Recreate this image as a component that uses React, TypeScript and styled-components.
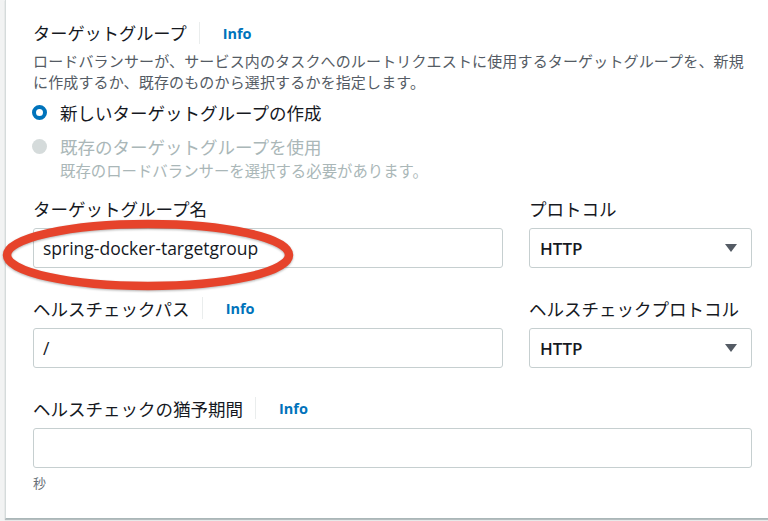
import styled, { createGlobalStyle } from "styled-components";

const GlobalStyle = createGlobalStyle`
  html, body {
    margin: 0;
    padding: 0;
    background: #f2f3f3;
  }
  body {
    font-family: "Noto Sans", "Noto Sans CJK JP", sans-serif;
    color: #16191f;
  }
`;

const Page = styled.div`
  height: 521px;
  overflow: hidden;
  padding-left: 5px;
`;

const Card = styled.section`
  position: relative;
  width: 800px;
  height: 519px;
  box-sizing: border-box;
  background: #ffffff;
  border-left: 1px solid #d5dbdb;
  border-bottom: 1px solid #aab7b8;
  box-shadow: 0 1px 1px 0 rgba(0, 28, 36, 0.25);
  padding: 21px 0 0 27px;
`;

const Content = styled.div`
  width: 719px;
`;

const HeadingRow = styled.div`
  display: flex;
  align-items: center;
  height: 24px;
`;

const Heading = styled.span`
  font-family: "Noto Sans CJK JP", sans-serif;
  font-size: 17.2px;
  line-height: 24px;
  color: #16191f;
`;

const Divider = styled.span`
  width: 1px;
  height: 22px;
  background: #eaeded;
  margin: 0 23px 0 12px;
`;

const InfoLink = styled.a`
  font-family: "Open Sans", "Noto Sans", sans-serif;
  font-weight: 700;
  font-size: 14.5px;
  color: #0073bb;
  text-decoration: none;
`;

const Description = styled.p`
  margin: 5px 0 0;
  font-family: "Noto Sans CJK JP", sans-serif;
  font-size: 15px;
  line-height: 21px;
  letter-spacing: 0.15px;
  color: #545b64;
`;

const RadioList = styled.div`
  margin-top: 7px;
  display: flex;
  flex-direction: column;
  gap: 8px;
`;

const RadioRow = styled.label<{ disabled?: boolean }>`
  display: flex;
  align-items: center;
  height: 26px;
  gap: 13px;
  font-family: "Noto Sans CJK JP", sans-serif;
  font-size: 17.5px;
  color: ${({ disabled }) => (disabled ? "#aab7b8" : "#16191f")};
`;

const RadioDot = styled.span<{ checked?: boolean }>`
  width: 15px;
  height: 15px;
  box-sizing: border-box;
  border-radius: 50%;
  margin-left: -1px;
  flex-shrink: 0;
  background: ${({ checked }) => (checked ? "#ffffff" : "#d5dbdb")};
  border: ${({ checked }) => (checked ? "4.5px solid #0073bb" : "none")};
`;

const RadioHint = styled.div`
  margin: 1px 0 0 27px;
  font-family: "Noto Sans CJK JP", sans-serif;
  font-size: 15.4px;
  line-height: 20px;
  color: #aab7b8;
`;

const FieldGrid = styled.div`
  margin-top: 16px;
  display: grid;
  grid-template-columns: 470px 223px;
  column-gap: 26px;
  row-gap: 28px;
`;

const Field = styled.div<{ wide?: boolean }>`
  position: relative;
  grid-column: ${({ wide }) => (wide ? "1 / -1" : "auto")};
`;

const FieldLabel = styled.div`
  display: flex;
  align-items: center;
  height: 24px;
  margin-bottom: 8px;
  font-family: "Noto Sans CJK JP", sans-serif;
  font-size: 17.5px;
  color: #16191f;
`;

const TextBox = styled.div`
  height: 40px;
  box-sizing: border-box;
  border: 1px solid #c6cfd0;
  border-radius: 3px;
  display: flex;
  align-items: center;
  padding: 0 9px;
  font-family: "Open Sans", "Noto Sans", sans-serif;
  font-size: 17.5px;
  color: #16191f;
`;

const SelectBox = styled(TextBox)`
  justify-content: space-between;
  padding: 0 14px 0 10px;
  font-weight: 600;
  font-size: 17px;
`;

const Caret = styled.span`
  width: 0;
  height: 0;
  border-left: 6.5px solid transparent;
  border-right: 6.5px solid transparent;
  border-top: 8px solid #545b64;
`;

const Unit = styled.div`
  margin-top: 5px;
  font-family: "Noto Sans CJK JP", sans-serif;
  font-size: 13px;
  line-height: 20px;
  color: #687078;
`;

const Mark = styled.svg`
  position: absolute;
  left: -34px;
  top: 18px;
  pointer-events: none;
  filter: drop-shadow(0 1px 1px rgba(0, 0, 0, 0.3));
`;

export default function App() {
  return (
    <>
      <GlobalStyle />
      <Page>
        <Card>
          <Content>
            <HeadingRow>
              <Heading>ターゲットグループ</Heading>
              <Divider />
              <InfoLink>Info</InfoLink>
            </HeadingRow>
            <Description>
              ロードバランサーが、サービス内のタスクへのルートリクエストに使用するターゲットグループを、新規
              <br />
              に作成するか、既存のものから選択するかを指定します。
            </Description>

            <RadioList>
              <RadioRow>
                <RadioDot checked />
                新しいターゲットグループの作成
              </RadioRow>
              <RadioRow disabled>
                <RadioDot />
                既存のターゲットグループを使用
              </RadioRow>
            </RadioList>
            <RadioHint>既存のロードバランサーを選択する必要があります。</RadioHint>

            <FieldGrid>
              <Field>
                <FieldLabel>ターゲットグループ名</FieldLabel>
                <TextBox>spring-docker-targetgroup</TextBox>
                <Mark width="300" height="80" viewBox="0 0 300 80">
                  <ellipse
                    cx="149"
                    cy="41"
                    rx="141"
                    ry="31"
                    fill="none"
                    stroke="#e6432b"
                    strokeWidth="8.5"
                  />
                </Mark>
              </Field>
              <Field>
                <FieldLabel>プロトコル</FieldLabel>
                <SelectBox>
                  HTTP
                  <Caret />
                </SelectBox>
              </Field>

              <Field>
                <FieldLabel>
                  ヘルスチェックパス
                  <Divider />
                  <InfoLink>Info</InfoLink>
                </FieldLabel>
                <TextBox>/</TextBox>
              </Field>
              <Field>
                <FieldLabel>ヘルスチェックプロトコル</FieldLabel>
                <SelectBox>
                  HTTP
                  <Caret />
                </SelectBox>
              </Field>

              <Field wide>
                <FieldLabel>
                  ヘルスチェックの猶予期間
                  <Divider />
                  <InfoLink>Info</InfoLink>
                </FieldLabel>
                <TextBox />
                <Unit>秒</Unit>
              </Field>
            </FieldGrid>
          </Content>
        </Card>
      </Page>
    </>
  );
}
